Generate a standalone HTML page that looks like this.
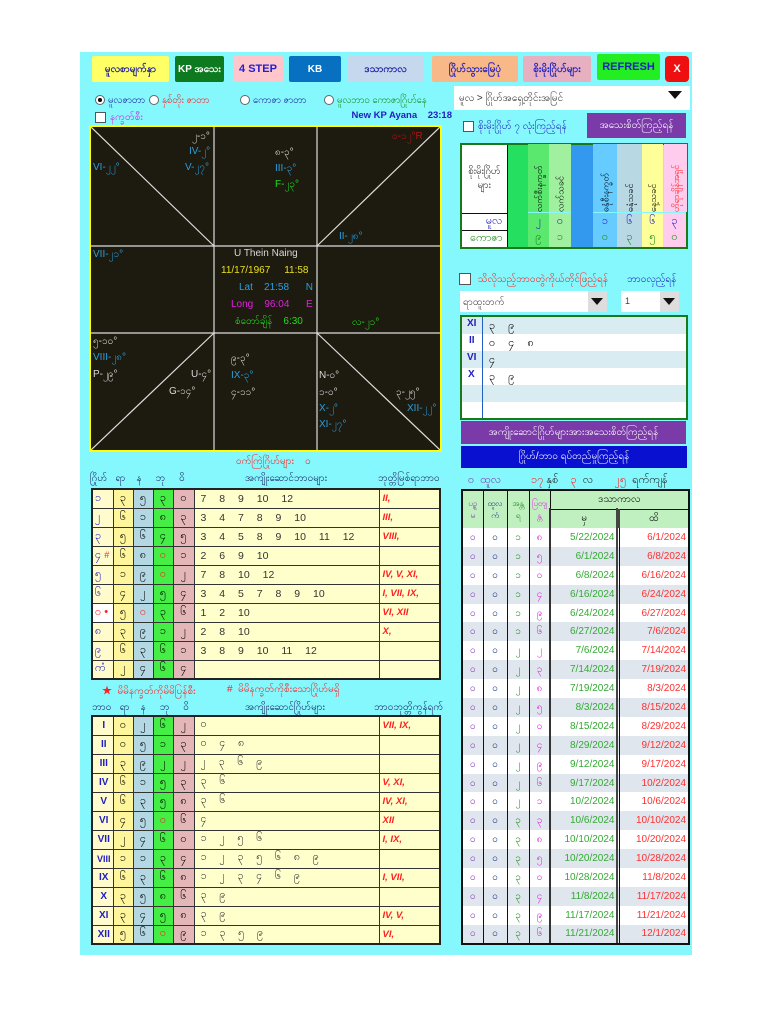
<!DOCTYPE html>
<html><head><meta charset="utf-8">
<style>
*{box-sizing:border-box;margin:0;padding:0}
body{width:768px;height:1024px;background:#fff;position:relative;font-family:"Liberation Sans","Noto Sans CJK SC",sans-serif;overflow:hidden}
.a{position:absolute;white-space:nowrap}
#panel{position:absolute;left:80px;top:52px;width:612px;height:903px;background:#84f8fd}
.btn{position:absolute;top:56px;height:26px;font-size:10px;font-weight:bold;display:flex;align-items:center;justify-content:center;border-radius:2px}
.chart{position:absolute;left:89px;top:125px;width:353px;height:327px;background:#1d1a0f;border:2px solid #ffff00}
.ct{position:absolute;font-size:10px;white-space:nowrap;line-height:12px}
.w{color:#d8d8d8}.b{color:#2aa0e0}.g{color:#22dd22}.y{color:#e8e020}.m{color:#e020e0}
table{border-collapse:collapse;table-layout:fixed;position:absolute}
td{padding:0;font-size:11px;overflow:hidden;white-space:nowrap}
.t1 td{border:1px solid #333;height:19px;text-align:center;background:#ffffcc}
.t1 td.c1{background:#fffbcc;color:#2020c0;text-align:left;padding-left:2px}
.t1 td.ya{background:#fff59a}.t1 td.bl{background:#b3d8e4}.t1 td.gr{background:#44ee44}.t1 td.pk{background:#e4b6b8}
.t1 td.nums{text-align:left;color:#333;font-size:10.5px;padding-left:6px;word-spacing:10px}
.t1 td.rn{text-align:left;color:#ff2020;font-style:italic;font-weight:bold;font-size:9.5px;padding-left:3px}
.r{color:#ff2020}
.hd{position:absolute;font-size:10px;color:#1a1a60;white-space:nowrap}
.t3 td{height:18.9px;text-align:center;border-left:1px solid #111;border-right:1px solid #111;font-size:10px}
.t3 tr:nth-child(even) td{background:#dfe6ee}
.t3 tr:nth-child(odd) td{background:#fff}
.t3 td.s{text-align:right;color:#33aa33;padding-right:4px}
.t3 td.e{text-align:right;color:#ff3030;padding-right:2px}
.rad{display:inline-block;width:10px;height:10px;border:1px solid #666;border-radius:50%;background:#fff;vertical-align:middle;margin-right:3px;position:relative}
.cb{display:inline-block;width:11px;height:11px;border:1px solid #555;background:#fff;vertical-align:middle;margin-right:4px}
</style></head><body>
<div id="panel"></div>

<div class="btn" style="left:92px;width:77px;background:#ffff66;color:#2020a0">မူလစာမျက်နှာ</div>
<div class="btn" style="left:175px;width:49px;background:#0d7a20;color:#fff">KP အသေး</div>
<div class="btn" style="left:233px;width:50px;background:#ffc6cc;color:#2020d0;font-size:11px">4 STEP</div>
<div class="btn" style="left:289px;width:52px;background:#0870c0;color:#fff">KB</div>
<div class="btn" style="left:347px;width:77px;background:#c6d8ee;color:#2020a0">ဒသာကာလ</div>
<div class="btn" style="left:432px;width:86px;background:#f8b888;color:#2020c0">ဂြိုဟ်သွားမြေပုံ</div>
<div class="btn" style="left:523px;width:68px;background:#e6b0c0;color:#2020c0">စိုးမိုးဂြိုဟ်များ</div>
<div class="btn" style="left:597px;width:63px;top:54px;background:#22ee22;color:#2020c0;font-size:11px">REFRESH</div>
<div class="btn" style="left:665px;width:24px;background:#ee1010;color:#fff;font-size:11px;border-radius:4px">X</div>

<div class="a" style="left:95px;top:94px;font-size:9.5px;color:#2020a0"><span class="rad" style="background:radial-gradient(#111 35%,#fff 40%)"></span>မူလဇာတာ</div>
<div class="a" style="left:149px;top:94px;font-size:9.5px;color:#ff2020"><span class="rad"></span>နှစ်တိုး ဇာတာ</div>
<div class="a" style="left:240px;top:94px;font-size:9.5px;color:#2020a0"><span class="rad"></span>ကောဇာ ဇာတာ</div>
<div class="a" style="left:324px;top:94px;font-size:9.5px;color:#1a8a1a"><span class="rad"></span>မူလဘာဝ ကောဇာဂြိုဟ်နေ</div>
<div class="a" style="left:95px;top:110px;font-size:10px;color:#e020e0"><span class="cb"></span>နက္ခတ်စီး</div>
<div class="a" style="left:300px;width:152px;text-align:right;top:110px;font-size:9.5px;font-weight:bold;color:#2020c0">New KP Ayana &nbsp;&nbsp; 23:18</div>

<div class="a" style="left:454px;top:86px;width:236px;height:24px;background:#fff;font-size:10px;color:#333;padding:5px 0 0 5px">မူလ &gt; ဂြိုဟ်အရှေ့တိုင်းအမြင်</div>
<div class="a" style="left:668px;top:91px;width:0;height:0;border-left:7px solid transparent;border-right:7px solid transparent;border-top:8px solid #111"></div>

<div class="a" style="left:463px;top:119px;font-size:10px;color:#2020c0"><span class="cb"></span>စိုးမိုးဂြိုဟ် ၇ လုံးကြည့်ရန်</div>
<div class="a" style="left:587px;top:113px;width:99px;height:25px;background:#7a3aa8;color:#fff;font-size:10px;text-align:center;line-height:25px">အသေးစိတ်ကြည့်ရန်</div>

<!-- Chart -->
<div class="chart">
<svg width="349" height="323" style="position:absolute;left:0;top:0">
<g stroke="#ddd" stroke-width="1.2">
<line x1="123" y1="0" x2="123" y2="323"/><line x1="226" y1="0" x2="226" y2="323"/>
<line x1="0" y1="119" x2="349" y2="119"/><line x1="0" y1="206" x2="349" y2="206"/>
<line x1="0" y1="0" x2="123" y2="119"/><line x1="349" y1="0" x2="226" y2="119"/>
<line x1="0" y1="323" x2="123" y2="206"/><line x1="349" y1="323" x2="226" y2="206"/>
</g></svg>
<div class="ct w" style="left:101px;top:4px">၂-၁°</div>
<div class="ct b" style="left:98px;top:19px">IV-၂°</div>
<div class="ct b" style="left:94px;top:35px">V-၂၇°</div>
<div class="ct b" style="left:2px;top:35px">VI-၂၂°</div>
<div class="ct w" style="left:184px;top:20px">၈-၃°</div>
<div class="ct b" style="left:184px;top:36px">III-၃°</div>
<div class="ct g" style="left:184px;top:52px">F-၂၃°</div>
<div class="ct r" style="left:301px;top:4px;color:#c01010">၀-၁၂°R</div>
<div class="ct b" style="left:248px;top:104px">II-၂၈°</div>
<div class="ct b" style="left:2px;top:122px">VII-၂၁°</div>
<div class="ct w" style="left:143px;top:121px">U Thein Naing</div>
<div class="ct y" style="left:130px;top:138px">11/17/1967 &nbsp;&nbsp;&nbsp; 11:58</div>
<div class="ct b" style="left:148px;top:155px">Lat &nbsp;&nbsp; 21:58 &nbsp;&nbsp;&nbsp;&nbsp; N</div>
<div class="ct m" style="left:140px;top:172px">Long &nbsp;&nbsp; 96:04 &nbsp;&nbsp;&nbsp;&nbsp; E</div>
<div class="ct g" style="left:144px;top:189px">စံတော်ချိန် &nbsp;&nbsp; 6:30</div>
<div class="ct g" style="left:261px;top:190px">လ-၂၁°</div>
<div class="ct w" style="left:2px;top:209px">၅-၁၀°</div>
<div class="ct b" style="left:2px;top:225px">VIII-၂၈°</div>
<div class="ct w" style="left:2px;top:242px">P-၂၉°</div>
<div class="ct w" style="left:100px;top:242px">U-၄°</div>
<div class="ct w" style="left:78px;top:259px">G-၁၄°</div>
<div class="ct w" style="left:140px;top:226px">၉-၃°</div>
<div class="ct b" style="left:140px;top:243px">IX-၃°</div>
<div class="ct w" style="left:140px;top:260px">၄-၁၁°</div>
<div class="ct w" style="left:228px;top:243px">N-၀°</div>
<div class="ct w" style="left:228px;top:260px">၁-၀°</div>
<div class="ct b" style="left:228px;top:276px">X-၂°</div>
<div class="ct b" style="left:228px;top:292px">XI-၂၇°</div>
<div class="ct w" style="left:305px;top:260px">၃-၂၅°</div>
<div class="ct b" style="left:316px;top:276px">XII-၂၂°</div>
</div>

<!-- right table -->
<table style="left:460px;top:143px;width:228px;border:2px solid #1a7a1a">
<colgroup><col style="width:46px"><col style="width:21px"><col style="width:21px"><col style="width:22px"><col style="width:22px"><col style="width:24px"><col style="width:25px"><col style="width:21px"><col style="width:24px"></colgroup>
<tr style="height:69px"><td style="background:#fff;font-size:9.5px;text-align:center;white-space:normal;border:1px solid #111;color:#222">စိုးမိုးဂြိုဟ်<br>များ</td>
<td style="background:#25e060;border-top:0"></td><td style="background:#5be86f;font-size:9px;writing-mode:vertical-rl;transform:rotate(180deg)">လက်စီးနက္ခတ်</td><td style="background:#a0f0a0;font-size:9px;writing-mode:vertical-rl;transform:rotate(180deg)">လက်သခင်</td><td style="background:#3399ee"></td><td style="background:#66ccff;font-size:9px;writing-mode:vertical-rl;transform:rotate(180deg)">ဓနုံစီးနက္ခတ်</td><td style="background:#b8d8e4;font-size:9px;writing-mode:vertical-rl;transform:rotate(180deg)">ဓနုံသခင်</td><td style="background:#ffff99;font-size:9px;writing-mode:vertical-rl;transform:rotate(180deg)">နေ့သခင်</td><td style="background:#ffccee;color:#ff2020;font-size:9px;writing-mode:vertical-rl;transform:rotate(180deg)">ဟိုရာချိန်အရှင်</td></tr>
<tr style="height:17px;text-align:center;color:#2020c0;font-size:10px"><td style="background:#fff;text-align:right;padding-right:4px;border:1px solid #111">မူလ</td><td style="background:#25e060"></td><td style="background:#5be86f">၂</td><td style="background:#a0f0a0">၀</td><td style="background:#3399ee"></td><td style="background:#66ccff">၁</td><td style="background:#b8d8e4">၆</td><td style="background:#ffff99">၆</td><td style="background:#ffccee">၃</td></tr>
<tr style="height:17px;text-align:center;color:#1a8a1a;font-size:10px"><td style="background:#fff;text-align:right;padding-right:4px;border:1px solid #111">ကောဇာ</td><td style="background:#25e060"></td><td style="background:#5be86f">၉</td><td style="background:#a0f0a0">၁</td><td style="background:#3399ee"></td><td style="background:#66ccff">၀</td><td style="background:#b8d8e4">၃</td><td style="background:#ffff99">၅</td><td style="background:#ffccee">၀</td></tr>
</table>

<div class="a" style="left:459px;top:272px;font-size:10px;color:#ff2020"><span class="cb" style="width:12px;height:12px"></span>&nbsp;သိလိုသည့်ဘာဝတွဲကိုယ်တိုင်ဖြည့်ရန်</div>
<div class="a" style="left:627px;top:272px;font-size:10px;color:#2020c0">ဘာဝလှည့်ရန်</div>
<div class="a" style="left:460px;top:291px;width:147px;height:21px;background:#fff;font-size:10px;color:#444;padding:4px 0 0 3px">ရာထူးတက်</div>
<div class="a" style="left:588px;top:291px;width:19px;height:21px;background:#ddd"></div>
<div class="a" style="left:591px;top:298px;border-left:6px solid transparent;border-right:6px solid transparent;border-top:7px solid #111"></div>
<div class="a" style="left:621px;top:291px;width:58px;height:21px;background:#fff;font-size:9px;color:#444;padding:5px 0 0 4px">1</div>
<div class="a" style="left:660px;top:291px;width:19px;height:21px;background:#ddd"></div>
<div class="a" style="left:663px;top:298px;border-left:6px solid transparent;border-right:6px solid transparent;border-top:7px solid #111"></div>

<div class="a" style="left:460px;top:315px;width:228px;height:105px;border:2px solid #1a7a1a;background:#fff">
<div style="height:17px;background:#d8ecf2"></div><div style="height:17px"></div><div style="height:17px;background:#d8ecf2"></div><div style="height:17px"></div><div style="height:17px;background:#d8ecf2"></div><div style="height:17px"></div>
<div class="a" style="left:20px;top:0;width:1px;height:101px;background:#2060c0"></div>
<div class="a" style="left:5px;top:1px;font-size:10px;font-weight:bold;color:#2020c0">XI</div>
<div class="a" style="left:7px;top:18px;font-size:10px;font-weight:bold;color:#2020c0">II</div>
<div class="a" style="left:5px;top:35px;font-size:10px;font-weight:bold;color:#2020c0">VI</div>
<div class="a" style="left:6px;top:52px;font-size:10px;font-weight:bold;color:#2020c0">X</div>
<div class="a" style="left:27px;top:2px;font-size:11px;word-spacing:10px">၃ ၉</div>
<div class="a" style="left:27px;top:19px;font-size:11px;word-spacing:10px">၀ ၄ ၈</div>
<div class="a" style="left:27px;top:36px;font-size:11px">၄</div>
<div class="a" style="left:27px;top:53px;font-size:11px;word-spacing:10px">၃ ၉</div>
</div>
<div class="a" style="left:461px;top:421px;width:225px;height:23px;background:#7a3aa8;color:#fff;font-size:10px;text-align:center;line-height:23px">အကျိုးဆောင်ဂြိုဟ်များအားအသေးစိတ်ကြည့်ရန်</div>
<div class="a" style="left:461px;top:446px;width:226px;height:22px;background:#0a10d0;color:#fff;font-size:10px;text-align:center;line-height:22px">ဂြိုဟ်/ဘာဝ ရပ်တည်မှုကြည့်ရန်</div>

<div class="a" style="left:468px;top:473px;font-size:11px;color:#7a3aa8">၀ &nbsp;ထူလ</div>
<div class="a" style="left:531px;top:473px;font-size:11px;color:#222"><span class="r">၁၇</span> နှစ် &nbsp;&nbsp; <span class="r">၃</span> &nbsp;လ &nbsp;&nbsp;&nbsp;&nbsp;&nbsp; <span class="r">၂၅</span> &nbsp;ရက်ကျန်</div>

<!-- dasha table -->
<table class="t3" style="left:461px;top:489px;width:227px;border:2px solid #111">
<colgroup><col style="width:21px"><col style="width:24px"><col style="width:22px"><col style="width:21px"><col style="width:69px"><col style="width:70px"></colgroup>
<tr><td rowspan="2" style="background:#c0f0c0;color:#7a3aa8;font-size:8px;height:38px">ပဥ္စ<br>မ</td><td rowspan="2" style="background:#c0f0c0;color:#1a3a8a;font-size:8px">ထူလ<br>ကံ</td><td rowspan="2" style="background:#c0f0c0;color:#1a8a1a;font-size:8px">အန္တ<br>ရ</td><td rowspan="2" style="background:#c0f0c0;color:#e020e0;font-size:8px">ပြတျ<br>န္တ</td><td colspan="2" style="background:#c0f0c0;height:19px;font-size:10px;border-bottom:1px solid #111">ဒသာကာလ</td></tr>
<tr><td style="background:#c0f0c0;height:19px">မှ</td><td style="background:#c0f0c0;border-left:2px solid #444">ထိ</td></tr>
<tr><td style="color:#8a3ab8">၀</td><td style="color:#1a3a8a">၀</td><td style="color:#1a8a1a">၁</td><td style="color:#e020e0">၈</td><td class="s">5/22/2024</td><td class="e">6/1/2024</td></tr>
<tr><td style="color:#8a3ab8">၀</td><td style="color:#1a3a8a">၀</td><td style="color:#1a8a1a">၁</td><td style="color:#e020e0">၅</td><td class="s">6/1/2024</td><td class="e">6/8/2024</td></tr>
<tr><td style="color:#8a3ab8">၀</td><td style="color:#1a3a8a">၀</td><td style="color:#1a8a1a">၁</td><td style="color:#e020e0">၀</td><td class="s">6/8/2024</td><td class="e">6/16/2024</td></tr>
<tr><td style="color:#8a3ab8">၀</td><td style="color:#1a3a8a">၀</td><td style="color:#1a8a1a">၁</td><td style="color:#e020e0">၄</td><td class="s">6/16/2024</td><td class="e">6/24/2024</td></tr>
<tr><td style="color:#8a3ab8">၀</td><td style="color:#1a3a8a">၀</td><td style="color:#1a8a1a">၁</td><td style="color:#e020e0">၉</td><td class="s">6/24/2024</td><td class="e">6/27/2024</td></tr>
<tr><td style="color:#8a3ab8">၀</td><td style="color:#1a3a8a">၀</td><td style="color:#1a8a1a">၁</td><td style="color:#e020e0">၆</td><td class="s">6/27/2024</td><td class="e">7/6/2024</td></tr>
<tr><td style="color:#8a3ab8">၀</td><td style="color:#1a3a8a">၀</td><td style="color:#1a8a1a">၂</td><td style="color:#e020e0">၂</td><td class="s">7/6/2024</td><td class="e">7/14/2024</td></tr>
<tr><td style="color:#8a3ab8">၀</td><td style="color:#1a3a8a">၀</td><td style="color:#1a8a1a">၂</td><td style="color:#e020e0">၃</td><td class="s">7/14/2024</td><td class="e">7/19/2024</td></tr>
<tr><td style="color:#8a3ab8">၀</td><td style="color:#1a3a8a">၀</td><td style="color:#1a8a1a">၂</td><td style="color:#e020e0">၈</td><td class="s">7/19/2024</td><td class="e">8/3/2024</td></tr>
<tr><td style="color:#8a3ab8">၀</td><td style="color:#1a3a8a">၀</td><td style="color:#1a8a1a">၂</td><td style="color:#e020e0">၅</td><td class="s">8/3/2024</td><td class="e">8/15/2024</td></tr>
<tr><td style="color:#8a3ab8">၀</td><td style="color:#1a3a8a">၀</td><td style="color:#1a8a1a">၂</td><td style="color:#e020e0">၀</td><td class="s">8/15/2024</td><td class="e">8/29/2024</td></tr>
<tr><td style="color:#8a3ab8">၀</td><td style="color:#1a3a8a">၀</td><td style="color:#1a8a1a">၂</td><td style="color:#e020e0">၄</td><td class="s">8/29/2024</td><td class="e">9/12/2024</td></tr>
<tr><td style="color:#8a3ab8">၀</td><td style="color:#1a3a8a">၀</td><td style="color:#1a8a1a">၂</td><td style="color:#e020e0">၉</td><td class="s">9/12/2024</td><td class="e">9/17/2024</td></tr>
<tr><td style="color:#8a3ab8">၀</td><td style="color:#1a3a8a">၀</td><td style="color:#1a8a1a">၂</td><td style="color:#e020e0">၆</td><td class="s">9/17/2024</td><td class="e">10/2/2024</td></tr>
<tr><td style="color:#8a3ab8">၀</td><td style="color:#1a3a8a">၀</td><td style="color:#1a8a1a">၂</td><td style="color:#e020e0">၁</td><td class="s">10/2/2024</td><td class="e">10/6/2024</td></tr>
<tr><td style="color:#8a3ab8">၀</td><td style="color:#1a3a8a">၀</td><td style="color:#1a8a1a">၃</td><td style="color:#e020e0">၃</td><td class="s">10/6/2024</td><td class="e">10/10/2024</td></tr>
<tr><td style="color:#8a3ab8">၀</td><td style="color:#1a3a8a">၀</td><td style="color:#1a8a1a">၃</td><td style="color:#e020e0">၈</td><td class="s">10/10/2024</td><td class="e">10/20/2024</td></tr>
<tr><td style="color:#8a3ab8">၀</td><td style="color:#1a3a8a">၀</td><td style="color:#1a8a1a">၃</td><td style="color:#e020e0">၅</td><td class="s">10/20/2024</td><td class="e">10/28/2024</td></tr>
<tr><td style="color:#8a3ab8">၀</td><td style="color:#1a3a8a">၀</td><td style="color:#1a8a1a">၃</td><td style="color:#e020e0">၀</td><td class="s">10/28/2024</td><td class="e">11/8/2024</td></tr>
<tr><td style="color:#8a3ab8">၀</td><td style="color:#1a3a8a">၀</td><td style="color:#1a8a1a">၃</td><td style="color:#e020e0">၄</td><td class="s">11/8/2024</td><td class="e">11/17/2024</td></tr>
<tr><td style="color:#8a3ab8">၀</td><td style="color:#1a3a8a">၀</td><td style="color:#1a8a1a">၃</td><td style="color:#e020e0">၉</td><td class="s">11/17/2024</td><td class="e">11/21/2024</td></tr>
<tr><td style="color:#8a3ab8">၀</td><td style="color:#1a3a8a">၀</td><td style="color:#1a8a1a">၃</td><td style="color:#e020e0">၆</td><td class="s">11/21/2024</td><td class="e">12/1/2024</td></tr>
</table>
<div class="a" style="left:549px;top:508px;width:2px;height:435px;background:#333"></div>
<div class="a" style="left:616px;top:508px;width:2px;height:435px;background:#444"></div>

<!-- left table 1 -->
<div class="a" style="left:236px;top:454px;font-size:10px;color:#ff2020">ဝက်ကြဲဂြိုဟ်များ &nbsp;&nbsp; ၀</div>
<div class="hd" style="left:90px;top:471px">ဂြိုဟ် &nbsp;&nbsp;ရာ &nbsp;&nbsp;&nbsp;န &nbsp;&nbsp;&nbsp;&nbsp;ဘု &nbsp;&nbsp;&nbsp;&nbsp;ဝိ</div>
<div class="hd" style="left:245px;top:471px">အကျိုးဆောင်ဘာဝများ</div>
<div class="hd" style="left:378px;top:471px">ဘုတ္တိမြစ်ရာဘာဝ</div>
<table class="t1" style="left:91px;top:488px;width:348px;border:2px solid #222">
<colgroup><col style="width:21px"><col style="width:20px"><col style="width:20px"><col style="width:20px"><col style="width:21px"><col style="width:185px"><col style="width:61px"></colgroup>
<tr><td class="c1">၁</td><td class="ya">၃</td><td class="bl">၅</td><td class="gr">၃</td><td class="pk">၀</td><td class="nums">7 8 9 10 12</td><td class="rn">II,</td></tr>
<tr><td class="c1">၂</td><td class="ya">၆</td><td class="bl">၁</td><td class="gr">၈</td><td class="pk">၃</td><td class="nums">3 4 7 8 9 10</td><td class="rn">III,</td></tr>
<tr><td class="c1">၃</td><td class="ya">၅</td><td class="bl">၆</td><td class="gr">၄</td><td class="pk">၅</td><td class="nums">3 4 5 8 9 10 11 12</td><td class="rn">VIII,</td></tr>
<tr><td class="c1">၄ <span class="r" style="font-size:9px">#</span></td><td class="ya">၆</td><td class="bl">၈</td><td class="gr r">၀</td><td class="pk">၁</td><td class="nums">2 6 9 10</td><td class="rn"></td></tr>
<tr><td class="c1">၅</td><td class="ya">၁</td><td class="bl">၉</td><td class="gr r">၀</td><td class="pk">၂</td><td class="nums">7 8 10 12</td><td class="rn">IV, V, XI,</td></tr>
<tr><td class="c1">၆</td><td class="ya">၄</td><td class="bl">၂</td><td class="gr">၅</td><td class="pk">၄</td><td class="nums">3 4 5 7 8 9 10</td><td class="rn">I, VII, IX,</td></tr>
<tr><td class="c1 r" style="background:#fff;color:#ff2020">၀ •</td><td class="ya">၅</td><td class="bl r">၀</td><td class="gr">၃</td><td class="pk">၆</td><td class="nums">1 2 10</td><td class="rn">VI, XII</td></tr>
<tr><td class="c1">၈</td><td class="ya">၃</td><td class="bl">၉</td><td class="gr">၁</td><td class="pk">၂</td><td class="nums">2 8 10</td><td class="rn">X,</td></tr>
<tr><td class="c1">၉</td><td class="ya">၆</td><td class="bl">၃</td><td class="gr">၆</td><td class="pk">၁</td><td class="nums">3 8 9 10 11 12</td><td class="rn"></td></tr>
<tr><td class="c1">ကံ</td><td class="ya">၂</td><td class="bl">၄</td><td class="gr">၆</td><td class="pk">၄</td><td class="nums"></td><td class="rn"></td></tr>
</table>
<div class="a" style="left:102px;top:682px;font-size:10px;color:#ff2020">★ &nbsp;မိမိနက္ခတ်ကိုမိမိပြန်စီး</div>
<div class="a" style="left:227px;top:682px;font-size:10px;color:#ff2020"># &nbsp;မိမိနက္ခတ်ကိုစီးသောဂြိုဟ်မရှိ</div>

<!-- left table 2 -->
<div class="hd" style="left:92px;top:700px">ဘာဝ &nbsp;&nbsp;ရာ &nbsp;&nbsp;&nbsp;န &nbsp;&nbsp;&nbsp;&nbsp;ဘု &nbsp;&nbsp;&nbsp;&nbsp;ဝိ</div>
<div class="hd" style="left:245px;top:700px">အကျိုးဆောင်ဂြိုဟ်များ</div>
<div class="hd" style="left:374px;top:700px">ဘာဝဘုတ္တိကွန်ရက်</div>
<table class="t1" style="left:91px;top:715px;width:348px;border:2px solid #222">
<colgroup><col style="width:21px"><col style="width:20px"><col style="width:20px"><col style="width:20px"><col style="width:21px"><col style="width:185px"><col style="width:61px"></colgroup>
<tr><td class="c1" style="text-align:center;font-weight:bold;font-size:10px">I</td><td class="ya">၀</td><td class="bl">၂</td><td class="gr">၆</td><td class="pk">၂</td><td class="nums">၀</td><td class="rn">VII, IX,</td></tr>
<tr><td class="c1" style="text-align:center;font-weight:bold;font-size:10px">II</td><td class="ya">၀</td><td class="bl">၅</td><td class="gr">၁</td><td class="pk">၃</td><td class="nums">၀ ၄ ၈</td><td class="rn"></td></tr>
<tr><td class="c1" style="text-align:center;font-weight:bold;font-size:10px">III</td><td class="ya">၃</td><td class="bl">၉</td><td class="gr">၂</td><td class="pk">၂</td><td class="nums">၂ ၃ ၆ ၉</td><td class="rn"></td></tr>
<tr><td class="c1" style="text-align:center;font-weight:bold;font-size:10px">IV</td><td class="ya">၆</td><td class="bl">၁</td><td class="gr">၅</td><td class="pk">၃</td><td class="nums">၃ ၆</td><td class="rn">V, XI,</td></tr>
<tr><td class="c1" style="text-align:center;font-weight:bold;font-size:10px">V</td><td class="ya">၆</td><td class="bl">၃</td><td class="gr">၅</td><td class="pk">၈</td><td class="nums">၃ ၆</td><td class="rn">IV, XI,</td></tr>
<tr><td class="c1" style="text-align:center;font-weight:bold;font-size:10px">VI</td><td class="ya">၄</td><td class="bl">၅</td><td class="gr r">၀</td><td class="pk">၆</td><td class="nums">၄</td><td class="rn">XII</td></tr>
<tr><td class="c1" style="text-align:center;font-weight:bold;font-size:10px">VII</td><td class="ya">၂</td><td class="bl">၄</td><td class="gr">၆</td><td class="pk">၀</td><td class="nums">၁ ၂ ၅ ၆</td><td class="rn">I, IX,</td></tr>
<tr><td class="c1" style="text-align:center;font-weight:bold;font-size:9px">VIII</td><td class="ya">၁</td><td class="bl">၁</td><td class="gr">၃</td><td class="pk">၄</td><td class="nums">၁ ၂ ၃ ၅ ၆ ၈ ၉</td><td class="rn"></td></tr>
<tr><td class="c1" style="text-align:center;font-weight:bold;font-size:10px">IX</td><td class="ya">၆</td><td class="bl">၃</td><td class="gr">၆</td><td class="pk">၈</td><td class="nums">၁ ၂ ၃ ၄ ၆ ၉</td><td class="rn">I, VII,</td></tr>
<tr><td class="c1" style="text-align:center;font-weight:bold;font-size:10px">X</td><td class="ya">၃</td><td class="bl">၅</td><td class="gr">၈</td><td class="pk">၆</td><td class="nums">၃ ၉</td><td class="rn"></td></tr>
<tr><td class="c1" style="text-align:center;font-weight:bold;font-size:10px">XI</td><td class="ya">၃</td><td class="bl">၄</td><td class="gr">၅</td><td class="pk">၈</td><td class="nums">၃ ၉</td><td class="rn">IV, V,</td></tr>
<tr><td class="c1" style="text-align:center;font-weight:bold;font-size:10px">XII</td><td class="ya">၅</td><td class="bl">၆</td><td class="gr r">၀</td><td class="pk">၉</td><td class="nums">၁ ၃ ၅ ၉</td><td class="rn">VI,</td></tr>
</table>
</body></html>
